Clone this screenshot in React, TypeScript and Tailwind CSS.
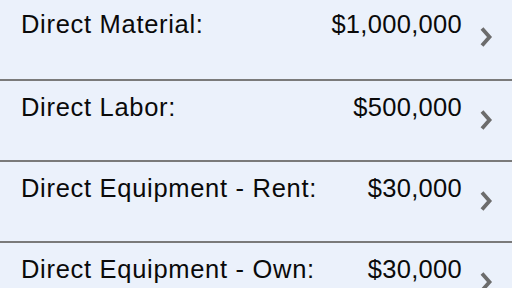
import React from "react";

const rows = [
  { label: "Direct Material:", value: "$1,000,000" },
  { label: "Direct Labor:", value: "$500,000" },
  { label: "Direct Equipment - Rent:", value: "$30,000" },
  { label: "Direct Equipment - Own:", value: "$30,000" },
];

function Chevron() {
  return (
    <svg width="14" height="22" viewBox="0 0 14 22" className="shrink-0">
      <path
        d="M3 2.5 L10.5 11 L3 19.5"
        fill="none"
        stroke="#6c6c6c"
        strokeWidth="3.8"
        strokeLinecap="butt"
        strokeLinejoin="miter"
      />
    </svg>
  );
}

export default function App() {
  return (
    <div
      className="w-[512px] h-[288px] overflow-hidden bg-[#ebf1fb] text-[#0a0a0a]"
      style={{ fontFamily: '"Liberation Sans", Arial, Helvetica, sans-serif' }}
    >
      {rows.map((r, i) => (
        <div
          key={i}
          className={`flex items-start h-[81px] border-b-2 border-[#7a7a7a] pl-[21px] pr-[19px] ${
            i === 0 ? "pt-[12px]" : "pt-[14px]"
          }`}
        >
          <div className="flex-1 text-[25.5px] leading-[25px] tracking-[0.7px] whitespace-nowrap">
            {r.label}
          </div>
          <div className="text-[25.5px] leading-[25px] tracking-[0.3px] whitespace-nowrap">
            {r.value}
          </div>
          <div className="ml-[17px] mt-[14px]">
            <Chevron />
          </div>
        </div>
      ))}
    </div>
  );
}
